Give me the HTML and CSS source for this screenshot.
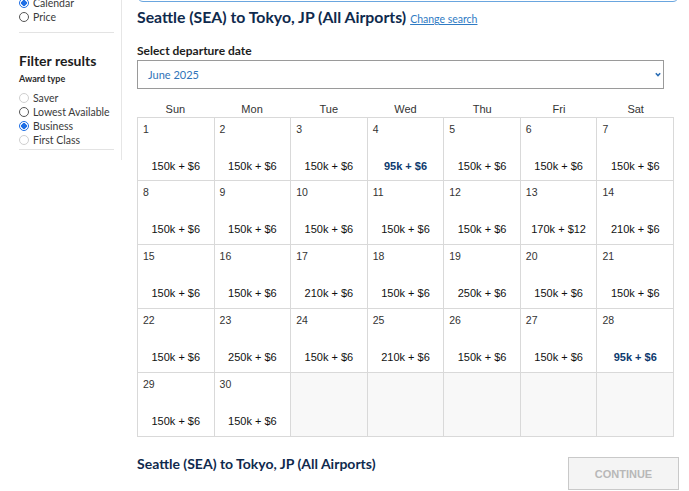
FILE: index.html
```html
<!DOCTYPE html>
<html>
<head>
<meta charset="utf-8">
<link rel="stylesheet" href="styles.css">
</head>
<body>
<div class="page">
  <aside class="sidebar">
    <div class="view-group">
      <div class="radio-row"><span class="radio checked"></span>Calendar</div>
      <div class="radio-row"><span class="radio"></span>Price</div>
    </div>
    <h2 class="filter-title">Filter results</h2>
    <div class="award-label">Award type</div>
    <div class="award-group">
      <div class="radio-row"><span class="radio disabled"></span>Saver</div>
      <div class="radio-row"><span class="radio"></span>Lowest Available</div>
      <div class="radio-row"><span class="radio checked"></span>Business</div>
      <div class="radio-row"><span class="radio disabled"></span>First Class</div>
    </div>
  </aside>
  <main class="main">
    <div class="top-box"></div>
    <div class="route-row">
      <h1 class="route-title">Seattle (SEA) to Tokyo, JP (All Airports)</h1>
      <a class="change-link" href="#">Change search</a>
    </div>
    <div class="date-label">Select departure date</div>
    <div class="month-select">
      <span class="month-text">June 2025</span>
      <svg class="chevron" width="6" height="5" viewBox="0 0 6 5"><path d="M0.8 1.2 L3 3.6 L5.2 1.2" fill="none" stroke="#2a6db5" stroke-width="1.5"/></svg>
    </div>
    <div class="weekdays">
      <div>Sun</div><div>Mon</div><div>Tue</div><div>Wed</div><div>Thu</div><div>Fri</div><div>Sat</div>
    </div>
    <div class="calendar">
      <div class="cell"><span class="day">1</span><span class="price">150k + $6</span></div>
      <div class="cell"><span class="day">2</span><span class="price">150k + $6</span></div>
      <div class="cell"><span class="day">3</span><span class="price">150k + $6</span></div>
      <div class="cell"><span class="day">4</span><span class="price low">95k + $6</span></div>
      <div class="cell"><span class="day">5</span><span class="price">150k + $6</span></div>
      <div class="cell"><span class="day">6</span><span class="price">150k + $6</span></div>
      <div class="cell"><span class="day">7</span><span class="price">150k + $6</span></div>

      <div class="cell"><span class="day">8</span><span class="price">150k + $6</span></div>
      <div class="cell"><span class="day">9</span><span class="price">150k + $6</span></div>
      <div class="cell"><span class="day">10</span><span class="price">150k + $6</span></div>
      <div class="cell"><span class="day">11</span><span class="price">150k + $6</span></div>
      <div class="cell"><span class="day">12</span><span class="price">150k + $6</span></div>
      <div class="cell"><span class="day">13</span><span class="price">170k + $12</span></div>
      <div class="cell"><span class="day">14</span><span class="price">210k + $6</span></div>

      <div class="cell"><span class="day">15</span><span class="price">150k + $6</span></div>
      <div class="cell"><span class="day">16</span><span class="price">150k + $6</span></div>
      <div class="cell"><span class="day">17</span><span class="price">210k + $6</span></div>
      <div class="cell"><span class="day">18</span><span class="price">150k + $6</span></div>
      <div class="cell"><span class="day">19</span><span class="price">250k + $6</span></div>
      <div class="cell"><span class="day">20</span><span class="price">150k + $6</span></div>
      <div class="cell"><span class="day">21</span><span class="price">150k + $6</span></div>

      <div class="cell"><span class="day">22</span><span class="price">150k + $6</span></div>
      <div class="cell"><span class="day">23</span><span class="price">250k + $6</span></div>
      <div class="cell"><span class="day">24</span><span class="price">150k + $6</span></div>
      <div class="cell"><span class="day">25</span><span class="price">210k + $6</span></div>
      <div class="cell"><span class="day">26</span><span class="price">150k + $6</span></div>
      <div class="cell"><span class="day">27</span><span class="price">150k + $6</span></div>
      <div class="cell"><span class="day">28</span><span class="price low">95k + $6</span></div>

      <div class="cell"><span class="day">29</span><span class="price">150k + $6</span></div>
      <div class="cell"><span class="day">30</span><span class="price">150k + $6</span></div>
      <div class="cell empty"></div>
      <div class="cell empty"></div>
      <div class="cell empty"></div>
      <div class="cell empty"></div>
      <div class="cell empty"></div>
    </div>
    <div class="bottom-row">
      <h2 class="route-title small">Seattle (SEA) to Tokyo, JP (All Airports)</h2>
      <button class="continue" type="button">CONTINUE</button>
    </div>
  </main>
</div>
</body>
</html>
```

FILE: styles.css
```css
html, body {
  margin: 0;
  padding: 0;
  background: #fff;
  overflow: hidden;
}
body {
  font-family: "Liberation Sans", Arial, sans-serif;
  color: #222;
  width: 689px;
  height: 491px;
}
.page {
  display: flex;
  align-items: flex-start;
}
.sidebar {
  width: 122px;
  height: 160px;
  box-sizing: border-box;
  border-right: 1px solid #e6e6e6;
  padding: 0 7px 0 19px;
  font-family: Lato, "Liberation Sans", sans-serif;
}
.view-group {
  margin-top: -4px;
  padding-bottom: 8px;
  border-bottom: 1px solid #e3e3e3;
}
.radio-row {
  display: flex;
  align-items: center;
  height: 14px;
  font-size: 10.5px;
  color: #3a3a3a;
  white-space: nowrap;
}
.radio {
  width: 10px;
  height: 10px;
  box-sizing: border-box;
  border: 1px solid #555;
  border-radius: 50%;
  margin-right: 4px;
  flex: none;
  background: #fff;
}
.radio.checked {
  border: 1px solid #1f6fe5;
  background: radial-gradient(circle, #1f6fe5 0 2.6px, #fff 3px);
}
.radio.disabled {
  border-color: #cfcfcf;
}
.filter-title {
  margin: 19px 0 0;
  font-size: 14px;
  line-height: 18px;
  font-weight: 700;
  color: #1d1d1d;
}
.award-label {
  margin-top: 3px;
  font-size: 9px;
  line-height: 12px;
  font-weight: 700;
  color: #2a2a2a;
}
.award-group {
  margin-top: 6px;
  padding-bottom: 2px;
  border-bottom: 1px solid #e3e3e3;
}
.main {
  width: 542px;
  padding-left: 15px;
}
.top-box {
  height: 14px;
  margin-top: -12px;
  box-sizing: border-box;
  border: 1px solid #6aa6df;
  border-radius: 6px;
}
.route-row {
  margin-top: 6px;
  display: flex;
  align-items: baseline;
  height: 18px;
}
.route-title {
  margin: 0;
  font-family: Lato, "Liberation Sans", sans-serif;
  font-size: 15.8px;
  line-height: 18px;
  font-weight: 700;
  color: #0f2a4d;
  white-space: nowrap;
}
.change-link {
  margin-left: 4px;
  font-family: Lato, "Liberation Sans", sans-serif;
  font-size: 10.5px;
  color: #2f7bc4;
  text-decoration: underline;
}
.date-label {
  margin-top: 17px;
  font-family: Lato, "Liberation Sans", sans-serif;
  font-size: 12px;
  line-height: 16px;
  font-weight: 700;
  color: #1d1d1d;
}
.month-select {
  margin-top: 1px;
  width: 527px;
  height: 29px;
  box-sizing: border-box;
  border: 1px solid #9a9a9a;
  display: flex;
  align-items: center;
  justify-content: space-between;
  padding: 0 2px 0 10px;
}
.month-text {
  font-family: Lato, "Liberation Sans", sans-serif;
  font-size: 11px;
  color: #2f73b8;
}
.chevron {
  display: block;
}
.weekdays {
  margin-top: 13px;
  width: 537px;
  display: grid;
  grid-template-columns: repeat(7, 1fr);
  height: 15px;
  font-size: 11px;
  line-height: 14px;
  color: #333;
  text-align: center;
}
.calendar {
  width: 537px;
  box-sizing: border-box;
  display: grid;
  grid-template-columns: repeat(7, 1fr);
  border-top: 1px solid #d9d9d9;
  border-left: 1px solid #d9d9d9;
}
.cell {
  height: 64px;
  box-sizing: border-box;
  border-right: 1px solid #d9d9d9;
  border-bottom: 1px solid #d9d9d9;
  display: flex;
  flex-direction: column;
  padding: 5px 0 0 5px;
}
.cell:nth-child(-n+7) {
  height: 63px;
}
.cell.empty {
  background: #f8f8f8;
}
.day {
  font-size: 10.5px;
  line-height: 12px;
  color: #333;
}
.price {
  margin-top: 24px;
  margin-left: -5px;
  font-size: 11px;
  line-height: 14px;
  color: #111;
  text-align: center;
}
.price.low {
  font-weight: 700;
  color: #0d3a6e;
}
.bottom-row {
  margin-top: 20px;
  display: flex;
  justify-content: space-between;
  align-items: flex-start;
}
.route-title.small {
  margin-top: -1px;
  font-size: 14px;
  line-height: 16px;
}
.continue {
  width: 111px;
  height: 33px;
  border: 1px solid #c9c9c9;
  background: #f4f4f4;
  color: #b8b8b8;
  font-family: "Liberation Sans", Arial, sans-serif;
  font-size: 11px;
  font-weight: 700;
  padding: 0;
}
```
